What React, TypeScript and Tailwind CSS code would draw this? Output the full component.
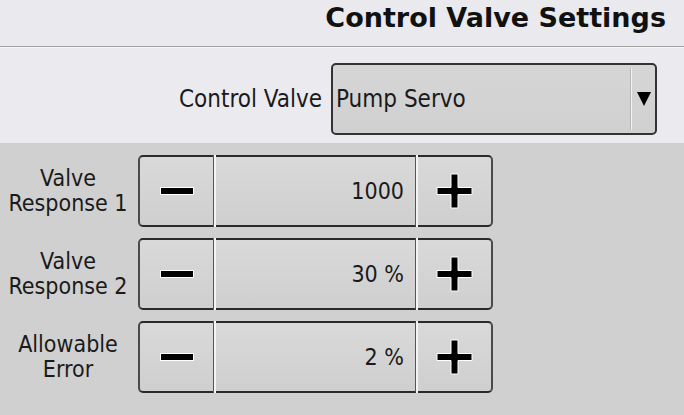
import React from "react";

const cond = { fontFamily: '"DejaVu Sans Condensed", "DejaVu Sans", sans-serif' } as React.CSSProperties;

function Minus() {
  return (
    <svg width="36" height="10" viewBox="0 0 36 10">
      <rect x="1.5" y="1.5" width="33" height="7" fill="#000" stroke="#fff" strokeWidth="1" />
    </svg>
  );
}

function Plus() {
  return (
    <svg width="37" height="36" viewBox="0 0 37 36">
      <path
        d="M15 1 H22 V14.5 H36 V21.5 H22 V35 H15 V21.5 H1 V14.5 H15 Z"
        fill="#000"
        stroke="#fff"
        strokeWidth="1"
      />
    </svg>
  );
}

function Row({ label1, label2, value }: { label1: string; label2: string; value: string }) {
  return (
    <div className="flex h-[72px] items-center">
      <div className="w-[136px] text-center text-[23px] leading-[25px] text-[#1a1a1a]" style={cond}>
        <div>{label1}</div>
        <div>{label2}</div>
      </div>
      <div className="ml-[2px] flex h-[72px] w-[355px]">
        <div className="flex w-[76px] items-center justify-center rounded-l-[5px] border-y-2 border-l-2 border-r border-y-[#2a2a2a] border-l-[#4a4a4a] border-r-[#555] bg-gradient-to-b from-[#d9d9d9] to-[#cfcfcf]">
          <Minus />
        </div>
        <div className="w-[2px] bg-[#f4f4f4]" />
        <div
          className="flex flex-1 items-center justify-end border-y-2 border-r border-y-[#2a2a2a] border-r-[#555] bg-gradient-to-b from-[#d9d9d9] to-[#cfcfcf] pr-[11px] text-[23px] text-[#1a1a1a]"
          style={cond}
        >
          {value}
        </div>
        <div className="w-[2px] bg-[#f4f4f4]" />
        <div className="flex w-[75px] items-center justify-center rounded-r-[5px] border-y-2 border-r-2 border-y-[#2a2a2a] border-r-[#4a4a4a] bg-gradient-to-b from-[#d9d9d9] to-[#cfcfcf]">
          <Plus />
        </div>
      </div>
    </div>
  );
}

export default function App() {
  return (
    <div className="flex h-[415px] w-[684px] flex-col overflow-hidden bg-[#d0d0d0]">
      <div className="flex h-[46px] justify-end bg-[#e9e9ee] pr-[18px] pt-[3px]">
        <div
          className="text-[27px] font-bold leading-[30px] text-[#111]"
          style={{ fontFamily: '"DejaVu Sans", sans-serif' }}
        >
          Control Valve Settings
        </div>
      </div>
      <div className="h-px bg-[#a3a3a3]" />
      <div className="h-px bg-[#f6f6f8]" />
      <div className="flex h-[95px] items-start justify-end bg-[#ebebef] pr-[27px] pt-[15px]">
        <div className="mr-[9px] flex h-[72px] items-center text-[24px] text-[#1a1a1a]" style={cond}>
          Control Valve
        </div>
        <div className="flex h-[72px] w-[326px] rounded-[5px] border-2 border-[#333] bg-gradient-to-b from-[#d6d6d6] to-[#d0d0d0]">
          <div className="flex flex-1 items-center pl-[3px] text-[24px] text-[#1a1a1a]" style={cond}>
            Pump Servo
          </div>
          <div className="my-[3px] w-px bg-[#b8b8b8]" />
          <div className="my-[3px] w-px bg-[#f2f2f2]" />
          <div className="flex w-[23px] items-center justify-center">
            <svg width="14" height="14" viewBox="0 0 14 14">
              <path d="M0 0 H14 L7 14 Z" fill="#000" />
            </svg>
          </div>
        </div>
      </div>
      <div className="flex flex-col gap-[11px] pt-[12px]">
        <Row label1="Valve" label2="Response 1" value="1000" />
        <Row label1="Valve" label2="Response 2" value="30 %" />
        <Row label1="Allowable" label2="Error" value="2 %" />
      </div>
    </div>
  );
}
